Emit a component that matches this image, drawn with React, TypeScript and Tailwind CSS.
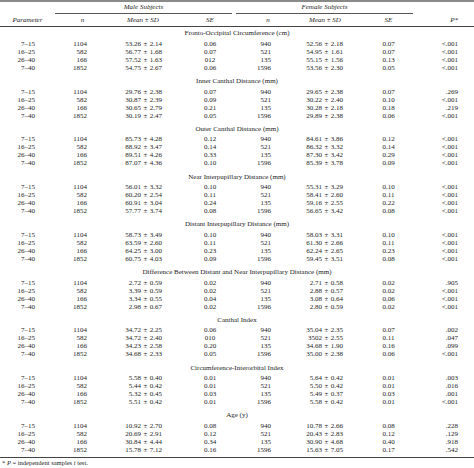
import React from "react";

type Row = [string, string, string, string, string, string, string, string];

type Section = {
  title: string;
  rows: Row[];
};

const sections: Section[] = [
  {
    title: "Fronto-Occipital Circumference (cm)",
    rows: [
      ["7–15", "1104", "53.26 ± 2.14", "0.06", "940", "52.56 ± 2.18", "0.07", "<.001"],
      ["16–25", "582", "56.77 ± 1.68", "0.07", "521", "54.95 ± 1.61", "0.07", "<.001"],
      ["26–40", "166", "57.52 ± 1.63", "012", "135", "55.15 ± 1.56", "0.13", "<.001"],
      ["7–40", "1852", "54.75 ± 2.67", "0.06", "1596", "53.56 ± 2.30", "0.05", "<.001"],
    ],
  },
  {
    title: "Inner Canthal Distance (mm)",
    rows: [
      ["7–15", "1104", "29.76 ± 2.38", "0.07", "940", "29.65 ± 2.38", "0.07", ".269"],
      ["16–25", "582", "30.87 ± 2.39", "0.09", "521", "30.22 ± 2.40", "0.10", "<.001"],
      ["26–40", "166", "30.65 ± 2.79", "0.21", "135", "30.28 ± 2.18", "0.18", ".219"],
      ["7–40", "1852", "30.19 ± 2.47", "0.05", "1596", "29.89 ± 2.38", "0.06", "<.001"],
    ],
  },
  {
    title: "Outer Canthal Distance (mm)",
    rows: [
      ["7–15", "1104", "85.73 ± 4.28", "0.12", "940", "84.61 ± 3.86", "0.12", "<.001"],
      ["16–25", "582", "88.92 ± 3.47", "0.14", "521", "86.32 ± 3.32", "0.14", "<.001"],
      ["26–40", "166", "89.51 ± 4.26", "0.33", "135", "87.30 ± 3.42", "0.29", "<.001"],
      ["7–40", "1852", "87.07 ± 4.36", "0.10", "1596", "85.39 ± 3.78", "0.09", "<.001"],
    ],
  },
  {
    title: "Near Interpupillary Distance (mm)",
    rows: [
      ["7–15", "1104", "56.01 ± 3.32", "0.10", "940", "55.31 ± 3.29", "0.10", "<.001"],
      ["16–25", "582", "60.20 ± 2.54", "0.11", "521", "58.41 ± 2.60", "0.11", "<.001"],
      ["26–40", "166", "60.91 ± 3.04", "0.24", "135", "59.16 ± 2.55", "0.22", "<.001"],
      ["7–40", "1852", "57.77 ± 3.74", "0.08", "1596", "56.65 ± 3.42", "0.08", "<.001"],
    ],
  },
  {
    title: "Distant Interpupillary Distance (mm)",
    rows: [
      ["7–15", "1104", "58.73 ± 3.49", "0.10", "940", "58.03 ± 3.31", "0.10", "<.001"],
      ["16–25", "582", "63.59 ± 2.60", "0.11", "521", "61.30 ± 2.66", "0.11", "<.001"],
      ["26–40", "166", "64.25 ± 3.00", "0.23", "135", "62.24 ± 2.65", "0.23", "<.001"],
      ["7–40", "1852", "60.75 ± 4.03", "0.09", "1596", "59.45 ± 3.51", "0.08", "<.001"],
    ],
  },
  {
    title: "Difference Between Distant and Near Interpupillary Distance (mm)",
    rows: [
      ["7–15", "1104", "2.72 ± 0.59", "0.02", "940", "2.71 ± 0.58", "0.02", ".905"],
      ["16–25", "582", "3.39 ± 0.59", "0.02", "521", "2.88 ± 0.57", "0.02", "<.001"],
      ["26–40", "166", "3.34 ± 0.55", "0.04", "135", "3.08 ± 0.64", "0.06", "<.001"],
      ["7–40", "1852", "2.98 ± 0.67", "0.02", "1596", "2.80 ± 0.59", "0.02", "<.001"],
    ],
  },
  {
    title: "Canthal Index",
    rows: [
      ["7–15", "1104", "34.72 ± 2.25", "0.06", "940", "35.04 ± 2.35", "0.07", ".002"],
      ["16–25", "582", "34.72 ± 2.40", "010", "521", "3502 ± 2.55", "0.11", ".047"],
      ["26–40", "166", "34.23 ± 2.58", "0.20", "135", "34.68 ± 1.90", "0.16", ".099"],
      ["7–40", "1852", "34.68 ± 2.33", "0.05", "1596", "35.00 ± 2.38", "0.06", "<.001"],
    ],
  },
  {
    title: "Circumference-Interorbital Index",
    rows: [
      ["7–15", "1104", "5.58 ± 0.40", "0.01", "940", "5.64 ± 0.42", "0.01", ".003"],
      ["16–25", "582", "5.44 ± 0.42", "0.01", "521", "5.50 ± 0.42", "0.01", ".016"],
      ["26–40", "166", "5.32 ± 0.45", "0.03", "135", "5.49 ± 0.37", "0.03", ".001"],
      ["7–40", "1852", "5.51 ± 0.42", "0.01", "1596", "5.58 ± 0.42", "0.01", "<.001"],
    ],
  },
  {
    title: "Age (y)",
    rows: [
      ["7–15", "1104", "10.92 ± 2.70", "0.08", "940", "10.78 ± 2.66", "0.08", ".228"],
      ["16–25", "582", "20.69 ± 2.91", "0.12", "521", "20.43 ± 2.83", "0.12", ".129"],
      ["26–40", "166", "30.84 ± 4.44", "0.34", "135", "30.90 ± 4.68", "0.40", ".918"],
      ["7–40", "1852", "15.78 ± 7.12", "0.16", "1596", "15.63 ± 7.05", "0.17", ".542"],
    ],
  },
];

const grid = "grid grid-cols-[55px_55px_66px_56px_4px_54px_70px_53px_61px]";

function Mean({ value }: { value: string }) {
  const [mean, sd] = value.split(" ± ");
  return (
    <>
      {mean}
      <span className="mx-[2.5px]">±</span>
      {sd}
    </>
  );
}

function DataRow({ row }: { row: Row }) {
  const [age, mN, mMean, mSe, fN, fMean, fSe, p] = row;
  return (
    <div className={`${grid} h-[8px] leading-[8px]`}>
      <div className="text-right pr-[20px]">{age}</div>
      <div className="text-right pr-[23px]">{mN}</div>
      <div className="text-right pr-[14px]">
        <Mean value={mMean} />
      </div>
      <div className="text-center pl-[12px]">{mSe}</div>
      <div />
      <div className="text-right pr-[19px]">{fN}</div>
      <div className="text-right pr-[17px]">
        <Mean value={fMean} />
      </div>
      <div className="text-center pl-[4px]">{fSe}</div>
      <div className="text-right pr-[16px]">{p}</div>
    </div>
  );
}

export default function App() {
  return (
    <div
      className="w-[474px] h-[468px] overflow-hidden bg-white text-[#1c1c1c] text-[7px] whitespace-nowrap"
      style={{ fontFamily: '"Liberation Serif", "Times New Roman", serif' }}
    >
      <div className="h-[1.5px] bg-[#8a8a8a]" />

      {/* header */}
      <div className={`${grid} pt-[0.5px] italic`}>
        <div />
        <div className="col-span-3 text-center leading-[8px] pt-[1px] pb-[2px] border-b border-[#555]">
          Male Subjects
        </div>
        <div />
        <div className="col-span-3 text-center leading-[8px] pt-[1px] pb-[2px] border-b border-[#555]">
          Female Subjects
        </div>
        <div />
      </div>
      <div className={`${grid} italic leading-[8px] pt-[2px] pb-[2px] border-b border-[#444]`}>
        <div className="text-center">Parameter</div>
        <div className="text-center">n</div>
        <div className="text-center">Mean ± SD</div>
        <div className="text-center pl-[12px]">SE</div>
        <div />
        <div className="text-center pl-[10px]">n</div>
        <div className="text-center">Mean ± SD</div>
        <div className="text-center pl-[4px]">SE</div>
        <div className="text-right pr-[16px]">P*</div>
      </div>

      {/* body */}
      <div className="flex flex-col pb-[3px] border-b-[1.5px] border-[#444]">
        {sections.map((s, i) => (
          <div key={s.title} className={i === 0 ? "pt-[2.3px]" : "pt-[5.25px]"}>
            <div className="text-center leading-[8px] mb-[2.5px]">{s.title}</div>
            {s.rows.map((r) => (
              <DataRow key={r[0]} row={r} />
            ))}
          </div>
        ))}
      </div>

      <div className="pl-[2px] pt-[1px] leading-[8px] text-[6.5px]">
        * <span className="italic">P</span> = independent samples <span className="italic">t</span> test.
      </div>
    </div>
  );
}
